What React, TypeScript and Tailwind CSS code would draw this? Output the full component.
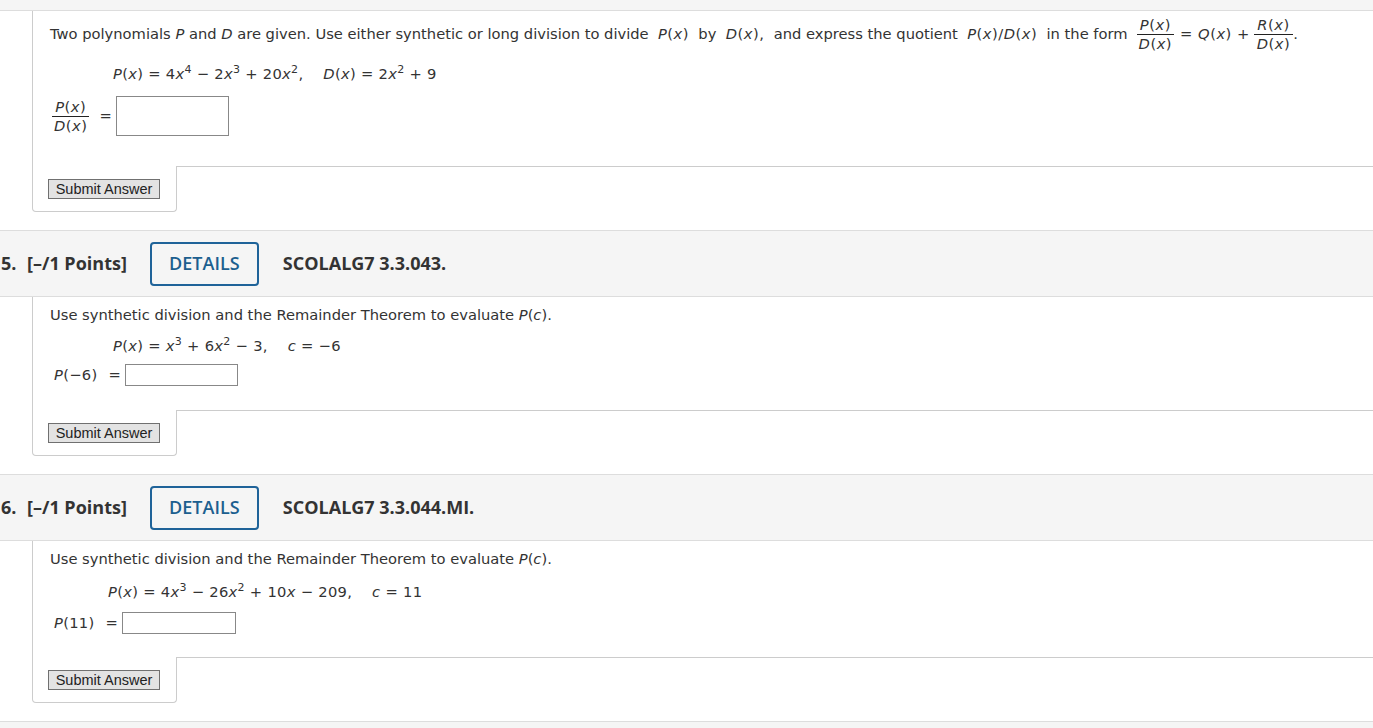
import React from 'react';

const V = ({ children }: { children: React.ReactNode }) => <i className="italic">{children}</i>;

// inline math run, set a touch looser than prose
const M = ({ children }: { children: React.ReactNode }) => <span className="tracking-[0.5px]">{children}</span>;

const Frac = ({ num, den, className = 'mx-1' }: { num: React.ReactNode; den: React.ReactNode; className?: string }) => (
    <span className={`inline-flex flex-col items-center align-middle leading-[17px] tracking-[0.5px] ${className}`}>
        <span className="border-b border-[#222] px-[3px] pb-[1px]">{num}</span>
        <span className="px-[3px]">{den}</span>
    </span>
);

const Sup = ({ children }: { children: React.ReactNode }) => (
    <sup className="text-[11px] relative -top-[6px]">{children}</sup>
);

const SubmitTab = () => (
    <div className="flex">
        <div className="w-[145px] border-l border-b border-r border-[#ccc] rounded-b-[4px] pl-[15px] pt-[13px] pb-[12px]">
            <button className="block h-[20px] w-[112px] border border-[#707070] bg-[#e3e3e3] text-[14.5px] leading-[18px] text-[#222] font-['Liberation_Sans',Arial,sans-serif]">
                Submit Answer
            </button>
        </div>
        <div className="flex-1 border-t border-[#ccc]" />
    </div>
);

const Header = ({ n, code }: { n: number; code: string }) => (
    <div className="h-[67px] bg-[#f5f5f5] border-y border-[#ddd] flex items-center font-['Open_Sans',sans-serif] text-[18px] font-bold text-[#333]">
        <span className="pl-[1px] w-[27px]">{n}.</span>
        <span>[–/1 Points]</span>
        <span className="ml-[23px] h-[44px] w-[109px] border-2 border-[#1f6399] rounded-[4px] flex items-center justify-center text-[#1c5f8f] font-semibold">
            DETAILS
        </span>
        <span className="ml-[24px]">{code}</span>
    </div>
);

export default function App() {
    return (
        <div className="w-[1373px] h-[728px] overflow-hidden bg-white text-[#333] font-['DejaVu_Sans',Verdana,sans-serif] text-[14.7px]">
            <div className="h-[11px] bg-[#f5f5f5] border-b border-[#ddd]" />

            {/* question 4 */}
            <div className="ml-[32px]">
                <div className="border-l border-[#ccc] pl-[17px] h-[155px]">
                    <div className="pt-[5px] flex items-center whitespace-nowrap">
                        <span>
                            Two polynomials <V>P</V> and <V>D</V> are given. Use either synthetic or long division to divide&nbsp;&nbsp;<M><V>P</V>(<V>x</V>)</M>&nbsp;&nbsp;by&nbsp;&nbsp;<M><V>D</V>(<V>x</V>),</M>&nbsp;&nbsp;and express the quotient&nbsp;&nbsp;<M><V>P</V>(<V>x</V>)/<V>D</V>(<V>x</V>)</M>&nbsp;&nbsp;in the form
                        </span>
                        <Frac className="ml-[8px]" num={<><V>P</V>(<V>x</V>)</>} den={<><V>D</V>(<V>x</V>)</>} />
                        <span className="ml-[5px] tracking-[0.5px]">= <V>Q</V>(<V>x</V>) +</span>
                        <Frac className="ml-[4px]" num={<><V>R</V>(<V>x</V>)</>} den={<><V>D</V>(<V>x</V>)</>} />
                        <span>.</span>
                    </div>
                    <div className="pl-[63px] mt-[12px] leading-[20px] whitespace-nowrap tracking-[0.3px]">
                        <V>P</V>(<V>x</V>) = 4<V>x</V><Sup>4</Sup> − 2<V>x</V><Sup>3</Sup> + 20<V>x</V><Sup>2</Sup>,&nbsp;&nbsp;&nbsp; <V>D</V>(<V>x</V>) = 2<V>x</V><Sup>2</Sup> + 9
                    </div>
                    <div className="flex items-center mt-[12px]">
                        <Frac className="ml-[1px]" num={<><V>P</V>(<V>x</V>)</>} den={<><V>D</V>(<V>x</V>)</>} />
                        <span className="ml-[9px] mr-[4px]">=</span>
                        <span className="w-[113px] h-[40px] border border-[#888] bg-white" />
                    </div>
                </div>
                <SubmitTab />
            </div>

            <div className="h-[18px]" />
            <Header n={5} code="SCOLALG7 3.3.043." />

            {/* question 5 */}
            <div className="ml-[32px]">
                <div className="border-l border-[#ccc] pl-[17px] h-[113px]">
                    <div className="pt-[8px] leading-[20px]">
                        Use synthetic division and the Remainder Theorem to evaluate <V>P</V>(<V>c</V>).
                    </div>
                    <div className="pl-[63px] mt-[11px] leading-[20px] whitespace-nowrap tracking-[0.3px]">
                        <V>P</V>(<V>x</V>) = <V>x</V><Sup>3</Sup> + 6<V>x</V><Sup>2</Sup> − 3,&nbsp;&nbsp;&nbsp; <V>c</V> = −6
                    </div>
                    <div className="flex items-center mt-[8px] pl-[4px] tracking-[0.3px]">
                        <span><V>P</V>(−6)</span>
                        <span className="ml-[11px] mr-[4px]">=</span>
                        <span className="w-[113px] h-[22px] border border-[#888] bg-white" />
                    </div>
                </div>
                <SubmitTab />
            </div>

            <div className="h-[18px]" />
            <Header n={6} code="SCOLALG7 3.3.044.MI." />

            {/* question 6 */}
            <div className="ml-[32px]">
                <div className="border-l border-[#ccc] pl-[17px] h-[116px]">
                    <div className="pt-[8px] leading-[20px]">
                        Use synthetic division and the Remainder Theorem to evaluate <V>P</V>(<V>c</V>).
                    </div>
                    <div className="pl-[58px] mt-[13px] leading-[20px] whitespace-nowrap tracking-[0.3px]">
                        <V>P</V>(<V>x</V>) = 4<V>x</V><Sup>3</Sup> − 26<V>x</V><Sup>2</Sup> + 10<V>x</V> − 209,&nbsp;&nbsp;&nbsp; <V>c</V> = 11
                    </div>
                    <div className="flex items-center mt-[10px] pl-[4px] tracking-[0.3px]">
                        <span><V>P</V>(11)</span>
                        <span className="ml-[11px] mr-[4px]">=</span>
                        <span className="w-[114px] h-[22px] border border-[#888] bg-white" />
                    </div>
                </div>
                <SubmitTab />
            </div>

            <div className="h-[18px]" />
            <div className="h-[20px] bg-[#f5f5f5] border-t border-[#ddd]" />
        </div>
    );
}
